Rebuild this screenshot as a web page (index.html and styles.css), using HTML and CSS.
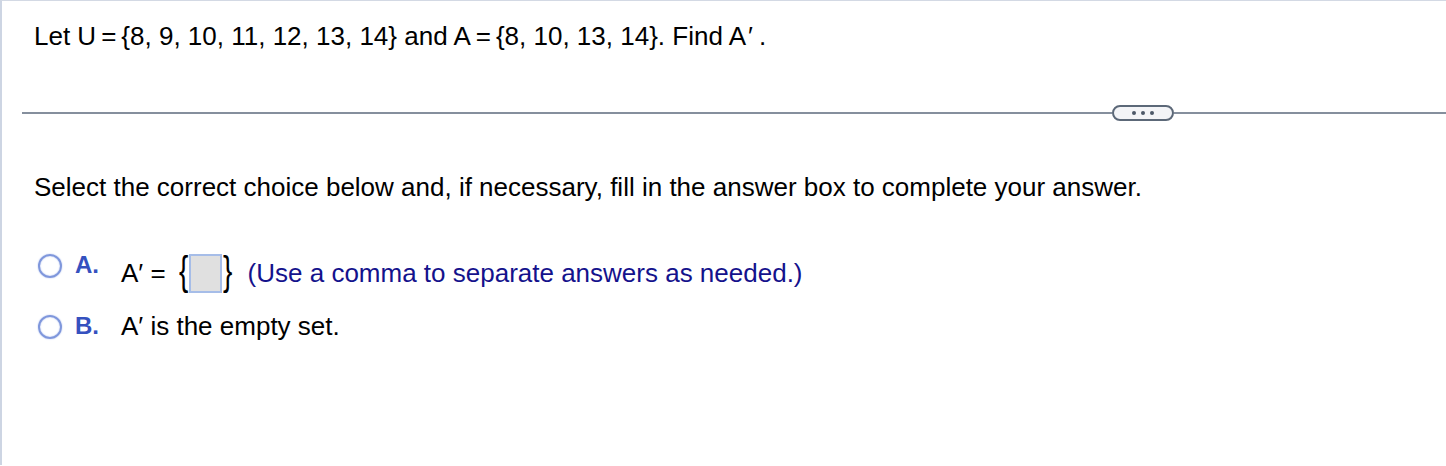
FILE: index.html
```html
<!DOCTYPE html>
<html>
<head>
<meta charset="utf-8">
<link rel="stylesheet" href="styles.css">
</head>
<body>
<div class="frame">
  <p class="question">Let U<span class="eq">=</span>{8, 9, 10, 11, 12, 13, 14} and A<span class="eq">=</span>{8, 10, 13, 14}. Find A<span class="prime">′</span>.</p>
  <div class="divider">
    <div class="line"></div>
    <div class="pill"><span></span><span></span><span></span></div>
    <div class="line tail"></div>
  </div>
  <p class="instructions">Select the correct choice below and, if necessary, fill in the answer box to complete your answer.</p>
  <div class="choices">
    <div class="choice choice-a">
      <span class="radio"></span>
      <span class="letter">A.</span>
      <span class="body">A′ = <span class="brace open">{</span><span class="box"></span><span class="brace">}</span><span class="hint">(Use a comma to separate answers as needed.)</span></span>
    </div>
    <div class="choice">
      <span class="radio"></span>
      <span class="letter">B.</span>
      <span class="body">A′ is the empty set.</span>
    </div>
  </div>
</div>
</body>
</html>
```

FILE: styles.css
```css
html, body {
  margin: 0;
  padding: 0;
  background: #ffffff;
}
body {
  font-family: "Liberation Sans", Arial, sans-serif;
  color: #000;
}
.frame {
  height: 464px;
  border-top: 1px solid #d3d9e4;
  border-left: 2px solid #cdd5e3;
}
.question {
  margin: 0;
  padding: 20px 0 0 32px;
  font-size: 26px;
  line-height: 30px;
}
.eq {
  margin: 0 5px;
}
.prime {
  margin: 0 6px 0 2px;
}
.divider {
  display: flex;
  align-items: center;
  margin: 54px 0 0 20px;
  height: 16px;
}
.line {
  height: 2px;
  background: #858f9d;
  width: 1090px;
}
.line.tail {
  flex: 1;
  width: auto;
}
.pill {
  width: 58px;
  height: 12px;
  border: 2px solid #5c6878;
  border-radius: 8px;
  background: #f3f4f7;
  display: flex;
  align-items: center;
  justify-content: center;
  gap: 5px;
}
.pill span {
  width: 4px;
  height: 4px;
  border-radius: 50%;
  background: #4d5868;
}
.instructions {
  margin: 0;
  padding: 51px 0 0 32px;
  font-size: 26px;
  line-height: 30px;
}
.choices {
  padding: 51px 0 0 36px;
  display: flex;
  flex-direction: column;
  gap: 21px;
}
.choice {
  display: flex;
  align-items: flex-start;
  font-size: 26px;
}
.radio {
  width: 20px;
  height: 20px;
  margin-top: 1px;
  border: 2px solid #7f97dc;
  border-radius: 50%;
  box-shadow: 0 0 1.5px #9fb2ea, inset 0 0 1.5px #9fb2ea;
  flex: none;
}
.letter {
  font-weight: bold;
  font-size: 24px;
  line-height: 24px;
  color: #3551bf;
  margin-left: 13px;
  width: 46px;
}
.body {
  display: inline-flex;
  align-items: center;
  line-height: 24px;
  white-space: pre;
}
.choice-a .body {
  height: 40px;
  line-height: 40px;
}
.brace {
  font-size: 40px;
  line-height: 40px;
  display: inline-block;
  transform: scaleX(0.7);
  margin: -4px -1px 0 -1px;
  font-weight: 300;
}
.brace.open {
  margin-left: 4px;
}
.box {
  width: 29px;
  height: 35px;
  border: 2px solid #a6bde8;
  background: #e0e0e0;
}
.hint {
  color: #14128c;
  margin-left: 14px;
}
```
